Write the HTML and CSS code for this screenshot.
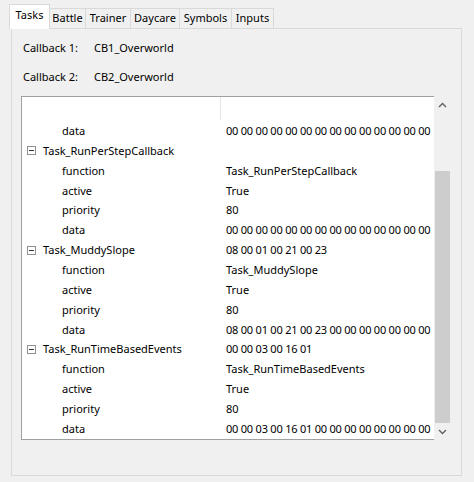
FILE: index.html
```html
<!DOCTYPE html>
<html>
<head>
<meta charset="utf-8">
<link rel="stylesheet" href="styles.css">
</head>
<body>
<div class="window">
  <div class="tabs">
    <div class="tab active t-tasks">Tasks</div>
    <div class="tab t-battle">Battle</div>
    <div class="tab t-trainer">Trainer</div>
    <div class="tab t-daycare">Daycare</div>
    <div class="tab t-symbols">Symbols</div>
    <div class="tab t-inputs">Inputs</div>
  </div>
  <div class="pane">
    <div class="callbacks">
      <div class="cb-row"><span class="cb-label">Callback 1:</span><span class="cb-value">CB1_Overworld</span></div>
      <div class="cb-row"><span class="cb-label">Callback 2:</span><span class="cb-value">CB2_Overworld</span></div>
    </div>
    <div class="treebox">
      <div class="tree">
        <div class="header"><div class="hcell"></div><div class="hcell"></div></div>
        <div class="row"><div class="name child">data</div><div class="val hex">00 00 00 00 00 00 00 00 00 00 00 00 00 00</div></div>
        <div class="row"><div class="name parent"><svg class="exp" width="9" height="9" viewBox="0 0 9 9"><rect x="0.5" y="0.5" width="8" height="8" fill="#fff" stroke="#919191"/><path d="M2 4.5h5" stroke="#333" stroke-width="1"/></svg>Task_RunPerStepCallback</div><div class="val"></div></div>
        <div class="row"><div class="name child">function</div><div class="val">Task_RunPerStepCallback</div></div>
        <div class="row"><div class="name child">active</div><div class="val">True</div></div>
        <div class="row"><div class="name child">priority</div><div class="val">80</div></div>
        <div class="row"><div class="name child">data</div><div class="val hex">00 00 00 00 00 00 00 00 00 00 00 00 00 00</div></div>
        <div class="row"><div class="name parent"><svg class="exp" width="9" height="9" viewBox="0 0 9 9"><rect x="0.5" y="0.5" width="8" height="8" fill="#fff" stroke="#919191"/><path d="M2 4.5h5" stroke="#333" stroke-width="1"/></svg>Task_MuddySlope</div><div class="val hex">08 00 01 00 21 00 23</div></div>
        <div class="row"><div class="name child">function</div><div class="val">Task_MuddySlope</div></div>
        <div class="row"><div class="name child">active</div><div class="val">True</div></div>
        <div class="row"><div class="name child">priority</div><div class="val">80</div></div>
        <div class="row"><div class="name child">data</div><div class="val hex">08 00 01 00 21 00 23 00 00 00 00 00 00 00</div></div>
        <div class="row"><div class="name parent"><svg class="exp" width="9" height="9" viewBox="0 0 9 9"><rect x="0.5" y="0.5" width="8" height="8" fill="#fff" stroke="#919191"/><path d="M2 4.5h5" stroke="#333" stroke-width="1"/></svg>Task_RunTimeBasedEvents</div><div class="val hex">00 00 03 00 16 01</div></div>
        <div class="row"><div class="name child">function</div><div class="val">Task_RunTimeBasedEvents</div></div>
        <div class="row"><div class="name child">active</div><div class="val">True</div></div>
        <div class="row"><div class="name child">priority</div><div class="val">80</div></div>
        <div class="row"><div class="name child">data</div><div class="val hex">00 00 03 00 16 01 00 00 00 00 00 00 00 00</div></div>
      </div>
      <div class="scrollbar">
        <div class="sb-btn"><svg width="9" height="6" viewBox="0 0 9 6"><path d="M1 5L4.5 1.5L8 5" fill="none" stroke="#606060" stroke-width="1.4"/></svg></div>
        <div class="sb-track"><div class="sb-thumb"></div></div>
        <div class="sb-btn"><svg width="9" height="6" viewBox="0 0 9 6"><path d="M1 1L4.5 4.5L8 1" fill="none" stroke="#606060" stroke-width="1.4"/></svg></div>
      </div>
    </div>
  </div>
</div>
</body>
</html>
```

FILE: styles.css
```css
html, body {
  margin: 0;
  padding: 0;
  background: #f0f0f0;
}
body {
  width: 474px;
  height: 482px;
  overflow: hidden;
  font-family: "Noto Sans", "Open Sans", sans-serif;
  font-size: 11px;
  color: #000;
}
.window {
  padding: 4px 0 0 9px;
}
.tabs {
  display: flex;
  align-items: flex-end;
  height: 24px;
  position: relative;
  z-index: 1;
}
.tab {
  box-sizing: border-box;
  height: 20px;
  line-height: 18px;
  text-align: center;
  border: 1px solid #d9d9d9;
  border-bottom: none;
  border-left: none;
  background: #f0f0f0;
  white-space: nowrap;
}
.tab.active {
  height: 25px;
  line-height: 20px;
  background: #fff;
  border-left: 1px solid #d9d9d9;
  margin-bottom: -1px;
}
.t-tasks { width: 41px; }
.t-battle { width: 36px; }
.t-trainer { width: 45px; }
.t-daycare { width: 49px; }
.t-symbols { width: 52px; }
.t-inputs { width: 42px; }

.pane {
  box-sizing: border-box;
  margin-left: 2px;
  width: 451px;
  height: 448px;
  border: 1px solid #d9d9d9;
  background: #f0f0f0;
}
.callbacks {
  padding: 9px 0 0 11px;
  display: flex;
  flex-direction: column;
  gap: 9px;
}
.cb-row {
  height: 20px;
  line-height: 20px;
  display: flex;
}
.cb-label {
  width: 71px;
}
.treebox {
  margin: 9px 0 0 9px;
  display: flex;
  height: 344px;
}
.tree {
  box-sizing: border-box;
  width: 413px;
  height: 344px;
  background: #fff;
  border: 1px solid #a0a0a0;
  border-right: none;
  overflow: hidden;
}
.header {
  display: grid;
  grid-template-columns: 199px 1fr;
  height: 24px;
}
.hcell:first-child {
  border-right: 1px solid #e5e5e5;
  margin-bottom: 1px;
}
.row {
  display: grid;
  grid-template-columns: 199px 1fr;
  height: 19.87px;
  line-height: 19.87px;
}
.name, .val {
  white-space: nowrap;
  overflow: hidden;
}
.name.child {
  padding-left: 40px;
}
.name.parent {
  padding-left: 5px;
  display: flex;
  align-items: center;
}
.exp {
  margin-right: 7px;
  flex: none;
}
.val {
  padding-left: 5px;
}
.val.hex {
  letter-spacing: -0.22px;
}
.scrollbar {
  width: 17px;
  height: 344px;
  display: flex;
  flex-direction: column;
  background: #f0f0f0;
}
.sb-btn {
  height: 17px;
  display: flex;
  align-items: center;
  justify-content: center;
}
.sb-track {
  flex: 1;
  padding-top: 58px;
  padding-left: 1px;
}
.sb-thumb {
  width: 15px;
  height: 252px;
  background: #cdcdcd;
}
```
